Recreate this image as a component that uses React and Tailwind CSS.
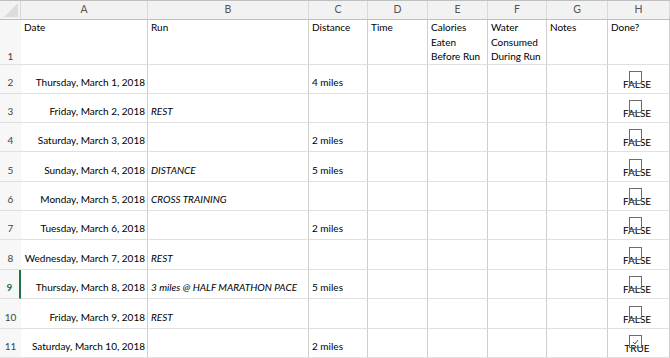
import React from 'react';

const cols = ['A', 'B', 'C', 'D', 'E', 'F', 'G', 'H'];

const rows = [
  { n: 2, date: 'Thursday, March 1, 2018', run: '', dist: '4 miles', done: false, h: 'h-[29px]' },
  { n: 3, date: 'Friday, March 2, 2018', run: 'REST', dist: '', done: false, h: 'h-[29px]' },
  { n: 4, date: 'Saturday, March 3, 2018', run: '', dist: '2 miles', done: false, h: 'h-[29px]' },
  { n: 5, date: 'Sunday, March 4, 2018', run: 'DISTANCE', dist: '5 miles', done: false, h: 'h-[30px]' },
  { n: 6, date: 'Monday, March 5, 2018', run: 'CROSS TRAINING', dist: '', done: false, h: 'h-[29px]' },
  { n: 7, date: 'Tuesday, March 6, 2018', run: '', dist: '2 miles', done: false, h: 'h-[29px]' },
  { n: 8, date: 'Wednesday, March 7, 2018', run: 'REST', dist: '', done: false, h: 'h-[30px]' },
  { n: 9, date: 'Thursday, March 8, 2018', run: '3 miles @ HALF MARATHON PACE', dist: '5 miles', done: false, h: 'h-[29px]', active: true },
  { n: 10, date: 'Friday, March 9, 2018', run: 'REST', dist: '', done: false, h: 'h-[30px]' },
  { n: 11, date: 'Saturday, March 10, 2018', run: '', dist: '2 miles', done: true, h: 'h-[29px]' },
];

const grid = 'grid grid-cols-[21px_127px_161px_59px_60px_60px_59px_61px_62px] grid-rows-[100%] overflow-hidden';
const cell = 'border-r border-b border-r-[#cfcfcf] border-b-[#e0e0e0] overflow-hidden';

const CheckCell = ({ done }) => (
  <div className={`relative ${cell} flex items-end justify-center pb-[2px] pr-[3px]`}>
    <span className="leading-[13px]">{done ? 'TRUE' : 'FALSE'}</span>
    <div className="absolute left-[21px] bottom-[9px] w-[13px] h-[13px] border border-[#6b6b6b] flex items-center justify-center">
      {done && (
        <svg width="7" height="6" viewBox="0 0 7 6">
          <path d="M1 3 L3 5 L6 1" stroke="#444" strokeWidth="0.9" fill="none" />
        </svg>
      )}
    </div>
  </div>
);

export default function App() {
  return (
    <div className="w-[670px] h-[358px] overflow-hidden bg-white text-black text-[10px] font-['Lato','Open_Sans',sans-serif]">
      {/* column letters */}
      <div className={`${grid} h-[20px] bg-[#f2f2f2] border-t border-b border-[#bfbfbf] text-[#555] text-[10.5px]`}>
        <div className="relative border-r border-[#d9d9d9]">
          <svg className="absolute right-[2px] bottom-[2px]" width="14" height="14" viewBox="0 0 14 14">
            <path d="M14 0 L14 14 L0 14 Z" fill="#dcdcdc" />
          </svg>
        </div>
        {cols.map((c) => (
          <div key={c} className="flex items-center justify-center border-r border-[#d9d9d9]">{c}</div>
        ))}
        <div />
      </div>

      {/* header row */}
      <div className={`${grid} h-[45px] leading-[14.5px]`}>
        <div className="flex items-end justify-center pb-[1px] bg-[#f7f7f7] border-b border-[#e0e0e0] text-[#444]">1</div>
        <div className={`${cell} px-[3px]`}>Date</div>
        <div className={`${cell} px-[3px]`}>Run</div>
        <div className={`${cell} px-[3px]`}>Distance</div>
        <div className={`${cell} px-[3px]`}>Time</div>
        <div className={`${cell} px-[3px]`}>Calories<br />Eaten<br />Before Run</div>
        <div className={`${cell} px-[3px]`}>Water<br />Consumed<br />During Run</div>
        <div className={`${cell} px-[3px]`}>Notes</div>
        <div className={`${cell} px-[3px]`}>Done?</div>
        <div className="border-b border-[#e0e0e0]" />
      </div>

      {rows.map((r) => (
        <div key={r.n} className={`${grid} ${r.h}`}>
          <div
            className={`flex items-end justify-center pb-[3px] bg-[#f7f7f7] border-b border-[#e0e0e0] ${
              r.active ? 'text-[#217346] font-bold border-r-2 border-r-[#217346]' : 'text-[#444]'
            }`}
          >
            {r.n}
          </div>
          <div className={`${cell} flex items-end justify-end pb-[3px] pr-[2px] whitespace-nowrap`}>{r.date}</div>
          <div className={`${cell} flex items-end pb-[3px] px-[3px] italic whitespace-nowrap`}>{r.run}</div>
          <div className={`${cell} flex items-end pb-[3px] px-[3px]`}>{r.dist}</div>
          <div className={cell} />
          <div className={cell} />
          <div className={cell} />
          <div className={cell} />
          <CheckCell done={r.done} />
          <div className="border-b border-[#e0e0e0]" />
        </div>
      ))}
    </div>
  );
}
